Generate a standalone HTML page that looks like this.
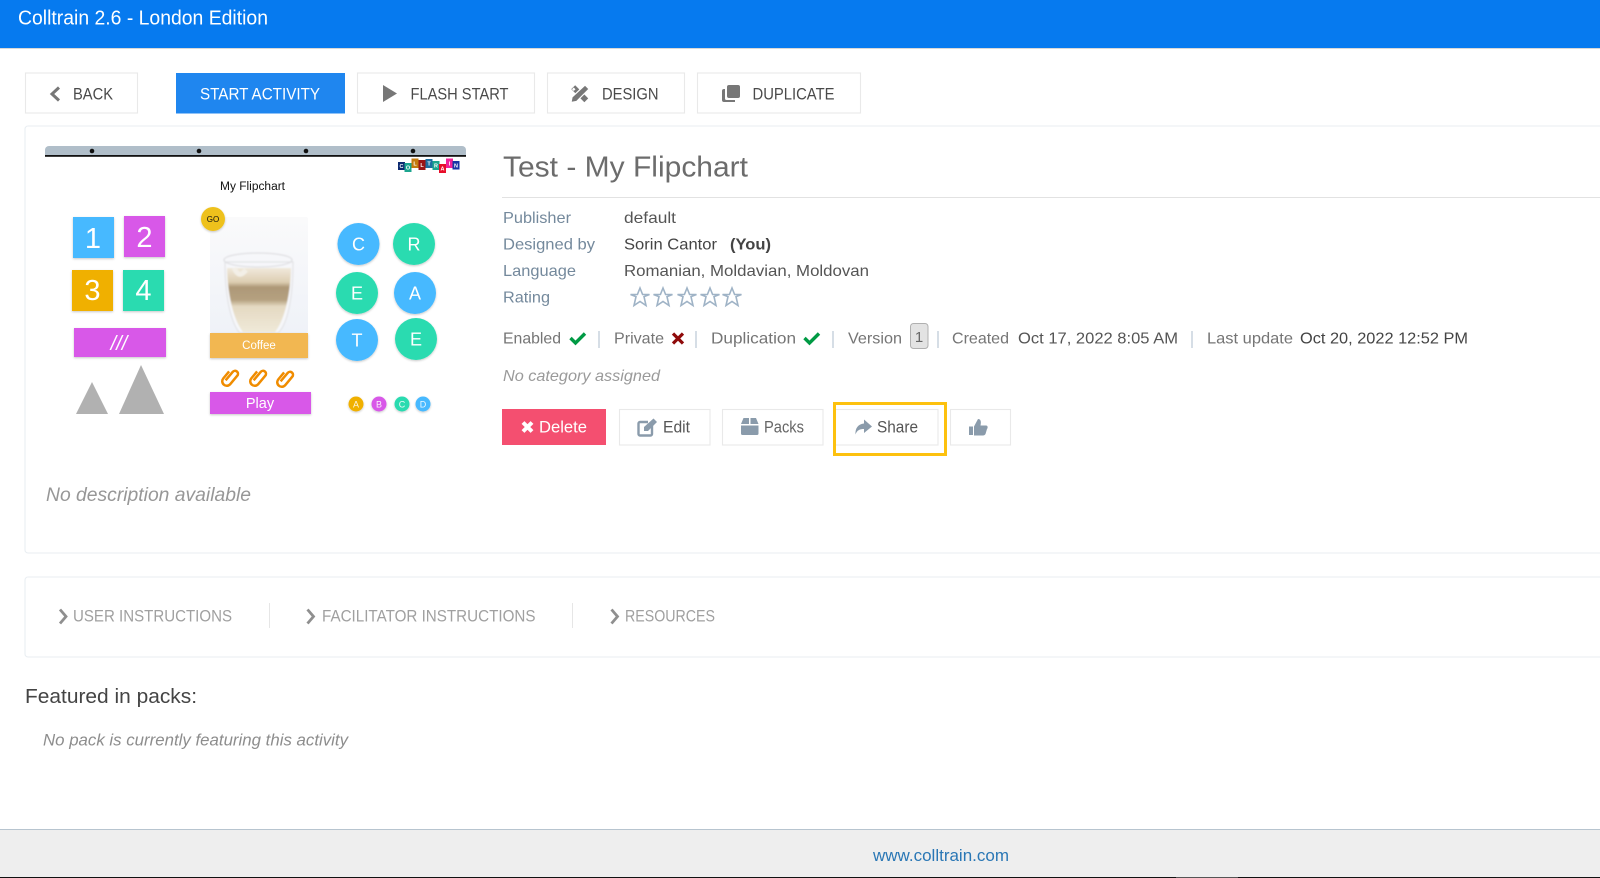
<!DOCTYPE html>
<html>
<head>
<meta charset="utf-8">
<title>Colltrain</title>
<style>
html,body{margin:0;padding:0;background:#fff;width:1600px;height:878px;overflow:hidden}
svg{display:block;position:absolute;left:0;top:0}
text{font-family:"Liberation Sans",sans-serif}
.btn{fill:#fff;stroke:#e9e9e9;stroke-width:1.1}
.card{fill:#fff;stroke:#e9eef2;stroke-width:1.1}
.b{font-size:17px;fill:#4a4a4a}
.l{font-size:16px;fill:#74899c}
.v{font-size:16px;fill:#555}
.m{font-size:16px;fill:#757575}
.d{font-size:16px;fill:#444}
.sep{stroke:#ccd6df;stroke-width:1.6}
.ic{fill:#8a9bab}
.w{fill:#fff;text-anchor:middle}
.tab{font-size:17px;fill:#a0a0a0}
.chev{fill:none;stroke:#8f8f8f;stroke-width:2.8}
</style>
</head>
<body>
<svg width="1600" height="878" viewBox="0 0 1600 878" xmlns="http://www.w3.org/2000/svg">
<defs>
<filter id="s" x="-20%" y="-20%" width="140%" height="140%"><feDropShadow dx="0" dy="1" stdDeviation="1" flood-color="#000" flood-opacity=".22"/></filter>
<filter id="bl" x="-5%" y="-5%" width="110%" height="110%"><feGaussianBlur stdDeviation="0.9"/></filter>
<filter id="bl2" x="-5%" y="-5%" width="110%" height="110%"><feGaussianBlur stdDeviation="0.35"/></filter>
<linearGradient id="cup" x1="0" y1="0" x2="0" y2="1">
<stop offset="0" stop-color="#f0e9dc"/><stop offset=".22" stop-color="#ddceb2"/><stop offset=".3" stop-color="#ad9877"/><stop offset=".5" stop-color="#b5a180"/><stop offset=".6" stop-color="#e4d9c2"/><stop offset="1" stop-color="#efe9d8"/>
</linearGradient>
<linearGradient id="bg" x1="0" y1="0" x2="0" y2="1"><stop offset="0" stop-color="#fafafb"/><stop offset="1" stop-color="#eff2f8"/></linearGradient>
<path id="clip" d="M-2 6V-5a3 3 0 0 1 6 0V6a4.500 4.500 0 0 1-9 0V-3" fill="none" stroke="#f08c00" stroke-width="2.500"/>
<path id="star" d="M0-9.500L2.600-3 9.500-3 4-.9 6 8 0 4 -6 8 -4-.9 -9.500-3 -2.600-3Z" fill="#fff" stroke="#9fb3c6" stroke-width="1.600" stroke-linejoin="miter"/>
</defs>

<!-- header -->
<rect x="0" y="0" width="1600" height="48" fill="#067aef"/>
<rect x="0" y="48" width="1600" height="1" fill="#d8d8d8"/>
<text x="18" y="24.500" font-size="20" fill="#fff" textLength="250" lengthAdjust="spacingAndGlyphs">Colltrain 2.6 - London Edition</text>

<!-- top buttons -->
<rect class="btn" x="25.500" y="73" width="112" height="40"/>
<path d="M59 87.500L52 94l7 6.500" fill="none" stroke="#777" stroke-width="3"/>
<text class="b" x="73" y="99.500" textLength="40" lengthAdjust="spacingAndGlyphs">BACK</text>

<rect x="176" y="73" width="169" height="40.500" fill="#1f86ef"/>
<text x="200" y="99.500" font-size="17" fill="#fff" textLength="120" lengthAdjust="spacingAndGlyphs">START ACTIVITY</text>

<rect class="btn" x="357.500" y="73" width="177" height="40"/>
<path d="M383 85L397 93.500 383 102Z" fill="#777"/>
<text class="b" x="410.500" y="99.500" textLength="98" lengthAdjust="spacingAndGlyphs">FLASH START</text>

<rect class="btn" x="547.500" y="73" width="137" height="40"/>
<g fill="#777">
<rect x="570.500" y="91" width="18.500" height="5.500" transform="rotate(45 579.750 93.750)"/>
<rect x="572.500" y="88" width="2.500" height="2.500" fill="#fff" transform="rotate(45 573.750 89.250)"/>
<path d="M585 85l4 4-12.500 12.500-5.500 1 1-5.500z" stroke="#fff" stroke-width="1.200"/>
</g>
<text class="b" x="602" y="99.500" textLength="56.500" lengthAdjust="spacingAndGlyphs">DESIGN</text>

<rect class="btn" x="697.500" y="73" width="163" height="40"/>
<rect x="727" y="85" width="13" height="13" rx="2" fill="#777"/>
<path d="M725 89v9.500a1.500 1.500 0 0 0 1.500 1.500H735v2h-11a2 2 0 0 1-2-2V91a2 2 0 0 1 2-2z" fill="#777"/>
<text class="b" x="752.500" y="99.500" textLength="82" lengthAdjust="spacingAndGlyphs">DUPLICATE</text>

<!-- main card -->
<rect class="card" x="25" y="126" width="1600" height="427" rx="3"/>

<!-- flipchart preview -->
<path d="M45 156V150a4 4 0 0 1 4-4H462a4 4 0 0 1 4 4v6Z" fill="#b0bec9"/>
<rect x="45" y="155" width="421" height="1.800" fill="#111"/>
<g fill="#111"><circle cx="92" cy="151" r="2.300"/><circle cx="199" cy="151" r="2.300"/><circle cx="306" cy="151" r="2.300"/><circle cx="413" cy="151" r="2.300"/></g>
<g font-size="5.500" font-weight="bold" text-anchor="middle" fill="#fff" filter="url(#bl2)">
<rect x="398" y="162" width="7" height="8" fill="#0b2a6f"/><text x="401.500" y="168">C</text>
<rect x="404.500" y="163" width="7" height="9" fill="#1aa58f"/><text x="408" y="169.500">O</text>
<rect x="411.500" y="158.500" width="7" height="9.500" fill="#c47a10"/><text x="415" y="165.500">L</text>
<rect x="418.500" y="160" width="7" height="10" fill="#9a1515"/><text x="422" y="167">L</text>
<rect x="425.500" y="159" width="7" height="9" fill="#1b6ea0"/><text x="429" y="165.500">T</text>
<rect x="432.500" y="161" width="7" height="9" fill="#1aa58f"/><text x="436" y="167.500">R</text>
<rect x="439" y="164" width="7" height="9" fill="#e8102a"/><text x="442.500" y="170.500">A</text>
<rect x="446" y="158.500" width="7" height="9.500" fill="#f0209a"/><text x="449.500" y="165.500">I</text>
<rect x="452.500" y="161" width="7" height="8.500" fill="#1535a5"/><text x="456" y="167.500">N</text>
</g>
<text x="220" y="190" font-size="11.500" fill="#111" textLength="65" lengthAdjust="spacingAndGlyphs">My Flipchart</text>

<g filter="url(#s)">
<rect x="73" y="217" width="41" height="41" fill="#46b9ff"/>
<rect x="124" y="216" width="41" height="41" fill="#d858e8"/>
<rect x="72" y="270" width="41" height="41" fill="#f0b000"/>
<rect x="123" y="270" width="41" height="41" fill="#2adbb0"/>
<rect x="74" y="328" width="92" height="29" fill="#d858e8"/>
</g>
<g font-size="29">
<text class="w" x="93" y="248">1</text>
<text class="w" x="144.500" y="247">2</text>
<text class="w" x="92.500" y="300">3</text>
<text class="w" x="143.500" y="300">4</text>
</g>
<text class="w" x="119" y="350" font-size="20" font-style="italic">///</text>
<path d="M92 382L108 414H76Z" fill="#b1b1b1"/>
<path d="M141 365L164 414H119Z" fill="#b1b1b1"/>

<!-- image card -->
<rect x="210" y="217" width="98" height="116" rx="2" fill="url(#bg)"/>
<g filter="url(#bl)">
<path d="M225 262C225 300 232 325 240 333H278C287 325 293 300 293 262Z" fill="#f6f7fa" stroke="#e3e3e6" stroke-width="1.200"/>
<path d="M227 268C228 300 235 322 243 332H275C283 322 290 300 291 268Z" fill="url(#cup)"/>
<ellipse cx="258" cy="260" rx="34" ry="7" fill="none" stroke="#e0e0e3" stroke-width="1.300"/>
<path d="M234 268C238 276 241 276 246 270" fill="none" stroke="#f3efe7" stroke-width="5"/>
</g>
<g filter="url(#s)">
<rect x="210" y="333" width="98" height="25" fill="#f2b751"/>
<rect x="210" y="392" width="101" height="22" fill="#d858e8"/>
<circle cx="213" cy="219" r="12" fill="#eec11e"/>
</g>
<text x="213" y="222" font-size="8" text-anchor="middle" fill="#111">GO</text>
<text class="w" x="259" y="349" font-size="11.500">Coffee</text>
<text class="w" x="260" y="408" font-size="14.500">Play</text>
<use href="#clip" transform="translate(231 377) rotate(40)"/>
<use href="#clip" transform="translate(259 377) rotate(40)"/>
<use href="#clip" transform="translate(286 378) rotate(40)"/>

<!-- circles -->
<g filter="url(#s)">
<circle cx="358.500" cy="244" r="21" fill="#46b9ff"/>
<circle cx="414" cy="244" r="21" fill="#2adbb0"/>
<circle cx="357" cy="293" r="21" fill="#2adbb0"/>
<circle cx="415" cy="293" r="21" fill="#46b9ff"/>
<circle cx="357" cy="340" r="21" fill="#46b9ff"/>
<circle cx="416" cy="339" r="21" fill="#2adbb0"/>
<circle cx="356" cy="404" r="7.500" fill="#f0b000"/>
<circle cx="379" cy="404" r="7.500" fill="#d858e8"/>
<circle cx="402" cy="404" r="7.500" fill="#2adbb0"/>
<circle cx="423" cy="404" r="7.500" fill="#46b9ff"/>
</g>
<g font-size="18">
<text class="w" x="358.500" y="250.500">C</text>
<text class="w" x="414" y="250.500">R</text>
<text class="w" x="357" y="299.500">E</text>
<text class="w" x="415" y="299.500">A</text>
<text class="w" x="357" y="346.500">T</text>
<text class="w" x="416" y="345.500">E</text>
</g>
<g font-size="9" opacity=".9">
<text class="w" x="356" y="407.500">A</text>
<text class="w" x="379" y="407.500">B</text>
<text class="w" x="402" y="407.500">C</text>
<text class="w" x="423" y="407.500">D</text>
</g>

<text x="46" y="501" font-size="19.500" font-style="italic" fill="#979797" textLength="205" lengthAdjust="spacingAndGlyphs">No description available</text>

<!-- details -->
<text x="503" y="176.500" font-size="29" fill="#6c6c6c" textLength="245" lengthAdjust="spacingAndGlyphs">Test - My Flipchart</text>
<rect x="502" y="197" width="1098" height="1" fill="#e2e2e2"/>

<text class="l" x="503" y="223" textLength="68" lengthAdjust="spacingAndGlyphs">Publisher</text>
<text class="v" x="624" y="223" textLength="52" lengthAdjust="spacingAndGlyphs">default</text>
<text class="l" x="503" y="249.500" textLength="92" lengthAdjust="spacingAndGlyphs">Designed by</text>
<text class="d" x="624" y="249.500" textLength="93" lengthAdjust="spacingAndGlyphs">Sorin Cantor</text>
<text x="730" y="249.500" font-size="16" font-weight="bold" fill="#444" textLength="41" lengthAdjust="spacingAndGlyphs">(You)</text>
<text class="l" x="503" y="276" textLength="73" lengthAdjust="spacingAndGlyphs">Language</text>
<text class="v" x="624" y="276" textLength="245" lengthAdjust="spacingAndGlyphs">Romanian, Moldavian, Moldovan</text>
<text class="l" x="503" y="302.500" textLength="47" lengthAdjust="spacingAndGlyphs">Rating</text>
<use href="#star" x="640" y="297.500"/><use href="#star" x="663" y="297.500"/><use href="#star" x="687" y="297.500"/><use href="#star" x="710" y="297.500"/><use href="#star" x="732" y="297.500"/>

<text class="m" x="503" y="343.500" textLength="58" lengthAdjust="spacingAndGlyphs">Enabled</text>
<path d="M570.500 338l5 5 9.500-9.500" fill="none" stroke="#009a44" stroke-width="3.400"/>
<line class="sep" x1="599" y1="331" x2="599" y2="348"/>
<text class="m" x="614" y="343.500" textLength="50" lengthAdjust="spacingAndGlyphs">Private</text>
<path d="M673 333.500l10 10M683 333.500l-10 10" fill="none" stroke="#8f0a0a" stroke-width="3.200"/>
<line class="sep" x1="696" y1="331" x2="696" y2="348"/>
<text class="m" x="711" y="343.500" textLength="85" lengthAdjust="spacingAndGlyphs">Duplication</text>
<path d="M804.500 338l5 5 9.500-9.500" fill="none" stroke="#009a44" stroke-width="3.400"/>
<line class="sep" x1="833" y1="331" x2="833" y2="348"/>
<text class="m" x="848" y="343.500" textLength="54" lengthAdjust="spacingAndGlyphs">Version</text>
<rect x="910.500" y="323.500" width="17.500" height="25" rx="3" fill="#e3e3e3" stroke="#b0b0b0"/>
<text x="919" y="342" font-size="15" text-anchor="middle" fill="#666">1</text>
<line class="sep" x1="938" y1="331" x2="938" y2="348"/>
<text class="m" x="952" y="343.500" textLength="57" lengthAdjust="spacingAndGlyphs">Created</text>
<text class="v" x="1018" y="343.500" textLength="160" lengthAdjust="spacingAndGlyphs">Oct 17, 2022 8:05 AM</text>
<line class="sep" x1="1192" y1="331" x2="1192" y2="348"/>
<text class="m" x="1207" y="343.500" textLength="86" lengthAdjust="spacingAndGlyphs">Last update</text>
<text class="d" x="1300" y="343.500" textLength="168" lengthAdjust="spacingAndGlyphs">Oct 20, 2022 12:52 PM</text>

<text x="503" y="381" font-size="16" font-style="italic" fill="#9a9a9a" textLength="157" lengthAdjust="spacingAndGlyphs">No category assigned</text>

<!-- action buttons -->
<rect x="502" y="409" width="104" height="36" fill="#f44f70"/>
<path d="M523 422.500l9 9M532 422.500l-9 9" fill="none" stroke="#fff" stroke-width="4"/>
<text x="539" y="432.500" font-size="17" fill="#fff" textLength="48" lengthAdjust="spacingAndGlyphs">Delete</text>

<rect class="btn" x="619.500" y="409.500" width="90.500" height="35.500"/>
<path d="M652 424.500V434a1.500 1.500 0 0 1-1.500 1.500H640a1.500 1.500 0 0 1-1.500-1.500V423.500A1.500 1.500 0 0 1 640 422H648" fill="none" stroke="#8a9bab" stroke-width="2.400"/>
<path d="M644 431v-4l9.500-8.500 3.500 3.500-9 9Z" class="ic"/>
<text x="663" y="432.500" font-size="17" fill="#555" textLength="27" lengthAdjust="spacingAndGlyphs">Edit</text>

<rect class="btn" x="722.500" y="409.500" width="100.500" height="35.500"/>
<path d="M743.500 418H749V424H741ZM750.500 418H756L758.500 424H750.500ZM741 425.500H758.500V433.500a1.500 1.500 0 0 1-1.500 1.500H742.500a1.500 1.500 0 0 1-1.500-1.500Z" class="ic"/>
<text x="764" y="432.500" font-size="17" fill="#666" textLength="40" lengthAdjust="spacingAndGlyphs">Packs</text>

<rect class="btn" x="835.500" y="409.500" width="102.500" height="35.500"/>
<path d="M864 419.500L872 426.500 864 433V429C860 429 857 430 855.500 434.500 855 428.500 858 424 864 423.500Z" class="ic"/>
<text x="877" y="432.500" font-size="17" fill="#555" textLength="41" lengthAdjust="spacingAndGlyphs">Share</text>

<rect class="btn" x="950.500" y="409.500" width="60" height="35.500"/>
<path d="M969 426.500h4v8.500h-4ZM974 426.500L978 419C980.500 419 981.500 421 980.500 425.500H986C988 425.500 988 428 987 429L985.500 434C985 435 984 435.500 983 435.500H974Z" class="ic"/>

<rect x="834.500" y="403.500" width="111" height="51" fill="none" stroke="#fdc10e" stroke-width="3"/>

<!-- tabs card -->
<rect class="card" x="25" y="577" width="1600" height="80" rx="3"/>
<path class="chev" d="M60 609.500l6 7-6 7"/>
<text class="tab" x="73" y="621.500" textLength="159" lengthAdjust="spacingAndGlyphs">USER INSTRUCTIONS</text>
<rect x="269" y="603" width="1" height="25" fill="#e6e6e6"/>
<path class="chev" d="M307.500 609.500l6 7-6 7"/>
<text class="tab" x="322" y="621.500" textLength="213.500" lengthAdjust="spacingAndGlyphs">FACILITATOR INSTRUCTIONS</text>
<rect x="572" y="603" width="1" height="25" fill="#e6e6e6"/>
<path class="chev" d="M611.500 609.500l6 7-6 7"/>
<text class="tab" x="625" y="621.500" textLength="90" lengthAdjust="spacingAndGlyphs">RESOURCES</text>

<text x="25" y="703" font-size="20" fill="#444" textLength="172" lengthAdjust="spacingAndGlyphs">Featured in packs:</text>
<text x="43" y="745.500" font-size="16.500" font-style="italic" fill="#8d8d8d" textLength="305" lengthAdjust="spacingAndGlyphs">No pack is currently featuring this activity</text>

<!-- footer -->
<rect x="0" y="829" width="1600" height="48" fill="#eeeeee"/>
<rect x="0" y="829" width="1600" height="1" fill="#b7c4cf"/>
<text x="873" y="861" font-size="16.500" fill="#2a77b5" textLength="136" lengthAdjust="spacingAndGlyphs">www.colltrain.com</text>
<rect x="0" y="877" width="1600" height="1" fill="#111"/>
<rect x="1176" y="877" width="62" height="1" fill="#555"/>
</svg>
</body>
</html>
